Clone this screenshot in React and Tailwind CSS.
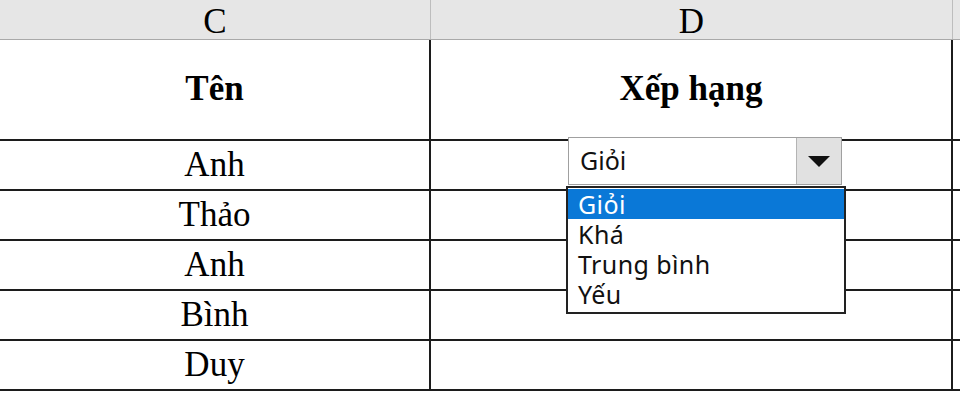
import React from 'react';

const names = ['Anh', 'Thảo', 'Anh', 'Bình', 'Duy'];
const options = ['Giỏi', 'Khá', 'Trung bình', 'Yếu'];

function Row({ c, d, tall, bold }) {
  return (
    <div className={`flex border-b-2 border-[#1c1c1c] ${tall ? 'h-[101px]' : 'h-[50px]'}`}>
      <div className={`w-[431px] shrink-0 border-r-2 border-[#1c1c1c] flex items-center justify-center text-[35px] ${bold ? 'font-bold' : ''}`}>
        {c}
      </div>
      <div className={`w-[522px] shrink-0 border-r-2 border-[#1c1c1c] flex items-center justify-center text-[35px] ${bold ? 'font-bold' : ''}`}>
        {d}
      </div>
      <div className="flex-1" />
    </div>
  );
}

export default function App() {
  return (
    <div
      className="relative w-[960px] h-[401px] overflow-hidden bg-white text-black"
      style={{ fontFamily: '"Liberation Serif", "Times New Roman", serif' }}
    >
      <div className="flex h-[40px] bg-[#e6e6e6] border-b border-[#a9a9a9] text-[35px] leading-none">
        <div className="w-[431px] shrink-0 border-r border-[#bdbdbd] flex items-center justify-center pt-1">C</div>
        <div className="w-[522px] shrink-0 border-r border-[#bdbdbd] flex items-center justify-center pt-1">D</div>
        <div className="flex-1" />
      </div>

      <Row c="Tên" d="Xếp hạng" tall bold />
      {names.map((n, i) => (
        <Row key={i} c={n} d="" />
      ))}

      {/* combo box */}
      <div
        className="absolute left-[568px] top-[137px] w-[274px] h-[48px] flex bg-white border border-[#a0a0a0]"
        style={{ fontFamily: '"Noto Sans", "Open Sans", sans-serif' }}
      >
        <div className="flex-1 flex items-center pl-[11px] text-[25px] text-[#111]">Giỏi</div>
        <div className="w-[45px] h-full bg-[#e1e1e1] border-l border-[#b4b4b4] flex items-center justify-center">
          <svg width="22" height="11" viewBox="0 0 22 11">
            <polygon points="0,0 22,0 11,11" fill="#111" />
          </svg>
        </div>
      </div>

      {/* list */}
      <div
        className="absolute left-[566px] top-[186px] w-[280px] h-[128px] bg-white border-2 border-[#222] pt-px"
        style={{ fontFamily: '"Noto Sans", "Open Sans", sans-serif' }}
      >
        {options.map((o, i) => (
          <div
            key={o}
            className={`h-[30px] pl-[10px] text-[25px] tracking-[0.4px] leading-[30px] ${i === 0 ? 'bg-[#0a78d7] text-white' : 'text-[#111]'}`}
          >
            {o}
          </div>
        ))}
      </div>
    </div>
  );
}
